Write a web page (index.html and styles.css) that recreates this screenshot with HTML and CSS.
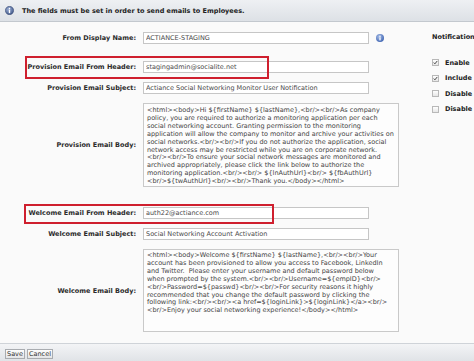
FILE: index.html
```html
<!DOCTYPE html>
<html>
<head>
<meta charset="utf-8">
<link rel="stylesheet" href="styles.css">
</head>
<body>
<div class="page">
  <div class="topbar">
    <svg class="icon-top" viewBox="0 0 10 10" width="9" height="9"><defs><radialGradient id="gt" cx="40%" cy="35%" r="70%"><stop offset="0" stop-color="#9db0d6"/><stop offset="1" stop-color="#3f5688"/></radialGradient></defs><circle cx="5" cy="5" r="4.6" fill="url(#gt)" stroke="#34476f" stroke-width="0.6"/><circle cx="5" cy="2.9" r="0.85" fill="#fff"/><rect x="4.25" y="4.2" width="1.5" height="3.7" fill="#fff"/></svg>
    <span class="topbar-text">The fields must be set in order to send emails to Employees.</span>
  </div>
  <div class="main">
    <form class="form">
      <div class="row">
        <label class="lbl">From Display Name:</label>
        <input class="txt" type="text" value="ACTIANCE-STAGING">
        <svg class="icon-info" viewBox="0 0 10 10" width="8" height="8"><defs><radialGradient id="gi" cx="40%" cy="35%" r="70%"><stop offset="0" stop-color="#a9bfe9"/><stop offset="1" stop-color="#3c62b0"/></radialGradient></defs><circle cx="5" cy="5" r="5" fill="url(#gi)"/><circle cx="5" cy="2.8" r="0.9" fill="#fff"/><rect x="4.2" y="4.2" width="1.6" height="3.8" fill="#fff"/></svg>
      </div>
      <div class="row row-prov-head">
        <label class="lbl">Provision Email From Header:</label>
        <input class="txt" type="text" value="stagingadmin@socialite.net">
        <span class="hl hl-prov"></span>
      </div>
      <div class="row">
        <label class="lbl">Provision Email Subject:</label>
        <input class="txt" type="text" value="Actiance Social Networking Monitor User Notification">
      </div>
      <div class="row">
        <label class="lbl">Provision Email Body:</label>
        <textarea class="area area-prov" wrap="off">&lt;html&gt;&lt;body&gt;Hi ${firstName} ${lastName},&lt;br/&gt;&lt;br/&gt;As company
policy, you are required to authorize a monitoring application per each
social networking account. Granting permission to the monitoring
application will allow the company to monitor and archive your activities on
social networks.&lt;br/&gt;&lt;br/&gt;If you do not authorize the application, social
network access may be restricted while you are on corporate network.
&lt;br/&gt;&lt;br/&gt;To ensure your social network messages are monitored and
archived appropriately, please click the link below to authorize the
monitoring application.&lt;br/&gt;&lt;br/&gt; ${lnAuthUrl}&lt;br/&gt; ${fbAuthUrl}
&lt;br/&gt;${twAuthUrl}&lt;br/&gt;&lt;br/&gt;Thank you.&lt;/body&gt;&lt;/html&gt;</textarea>
      </div>
      <div class="row row-wel-head">
        <label class="lbl">Welcome Email From Header:</label>
        <input class="txt" type="text" value="auth22@actiance.com">
        <span class="hl hl-wel"></span>
      </div>
      <div class="row">
        <label class="lbl">Welcome Email Subject:</label>
        <input class="txt" type="text" value="Social Networking Account Activation">
      </div>
      <div class="row">
        <label class="lbl">Welcome Email Body:</label>
        <textarea class="area area-wel" wrap="off">&lt;html&gt;&lt;body&gt;Welcome ${firstName} ${lastName},&lt;br/&gt;&lt;br/&gt;Your
account has been provisioned to allow you access to Facebook, LinkedIn
and Twitter.  Please enter your username and default password below
when prompted by the system.&lt;br/&gt;&lt;br/&gt;Username=${empID}&lt;br/&gt;
&lt;br/&gt;Password=${passwd}&lt;br/&gt;&lt;br/&gt;For security reasons it highly
recommended that you change the default password by clicking the
following link:&lt;br/&gt;&lt;br/&gt;&lt;a href=${loginLink}&gt;${loginLink}&lt;/a&gt;&lt;br/&gt;
&lt;br/&gt;Enjoy your social networking experience!&lt;/body&gt;&lt;/html&gt;</textarea>
      </div>
    </form>
    <aside class="side">
      <div class="side-title">Notification</div>
      <div class="opt opt-first"><span class="cb"><svg viewBox="0 0 7 7" width="5" height="5"><path d="M1 3.6 L2.7 5.3 L6 1.3" stroke="#2a2a2a" stroke-width="1.2" fill="none"/></svg></span><span class="opt-text">Enable</span></div>
      <div class="opt"><span class="cb"><svg viewBox="0 0 7 7" width="5" height="5"><path d="M1 3.6 L2.7 5.3 L6 1.3" stroke="#2a2a2a" stroke-width="1.2" fill="none"/></svg></span><span class="opt-text">Include</span></div>
      <div class="opt"><span class="cb"></span><span class="opt-text">Disable</span></div>
      <div class="opt"><span class="cb"></span><span class="opt-text">Disable</span></div>
    </aside>
  </div>
  <div class="footer">
    <button class="btn" type="button">Save</button>
    <button class="btn" type="button">Cancel</button>
  </div>
</div>
</body>
</html>
```

FILE: styles.css
```css
html, body {
  margin: 0;
  padding: 0;
}
body {
  font-family: "DejaVu Sans", Verdana, sans-serif;
  font-size: 6.5px;
  color: #2b2b2b;
  background: #fafafa;
}
.page {
  width: 474px;
  height: 361px;
  display: flex;
  flex-direction: column;
  overflow: hidden;
}
.topbar {
  flex: none;
  height: 21px;
  border-bottom: 1px solid #c3c8ce;
  background: linear-gradient(#eef0f3, #dde1e6);
  display: flex;
  align-items: center;
  padding-left: 5px;
  gap: 8px;
}
.icon-top { flex: none; }
.topbar-text {
  font-weight: bold;
  color: #222;
  white-space: nowrap;
}
.main {
  flex: 1;
  display: flex;
  min-height: 0;
}
.form {
  flex: none;
  width: 410px;
  margin: 0;
  padding-top: 10px;
  display: flex;
  flex-direction: column;
  gap: 9px;
}
.row {
  display: flex;
  align-items: center;
  gap: 7px;
  position: relative;
}
.row-prov-head { margin-top: 8px; }
.row-wel-head { margin-top: 11px; }
.lbl {
  flex: none;
  width: 136px;
  text-align: right;
  font-weight: bold;
  color: #2b2b2b;
  white-space: nowrap;
  line-height: 8px;
}
.txt {
  flex: none;
  width: 226px;
  height: 12px;
  box-sizing: border-box;
  margin: 0;
  border: 1px solid #c6c6c6;
  padding: 0 2px;
  font-family: "DejaVu Sans", Verdana, sans-serif;
  font-size: 6.5px;
  color: #4a4a4a;
  background: #fff;
  outline: none;
}
.icon-info { flex: none; }
.area {
  flex: none;
  width: 256px;
  box-sizing: border-box;
  margin: 0;
  border: 1px solid #c9c9c9;
  padding: 3px 3px 0;
  font-family: "DejaVu Sans", Verdana, sans-serif;
  font-size: 6.5px;
  line-height: 7.9px;
  color: #444;
  background: #fdfdfd;
  white-space: pre;
  overflow: hidden;
  resize: none;
  outline: none;
}
.area-prov { height: 84px; }
.area-wel { height: 83px; padding-top: 2px; }
.hl {
  position: absolute;
  box-sizing: border-box;
  border: 2px solid #cf1f2e;
  pointer-events: none;
}
.hl-prov {
  left: 25px;
  top: -5px;
  width: 244px;
  height: 23px;
}
.hl-wel {
  left: 24px;
  top: -3px;
  width: 250px;
  height: 20px;
}
.side {
  flex: 1;
  padding: 11px 0 0 22px;
  white-space: nowrap;
  overflow: hidden;
}
.side-title {
  font-weight: bold;
  line-height: 8px;
  color: #222;
}
.opt {
  display: flex;
  align-items: center;
  gap: 6px;
  height: 15.5px;
}
.opt-first { margin-top: 14px; }
.cb {
  flex: none;
  width: 7px;
  height: 7px;
  box-sizing: border-box;
  border: 1px solid #b8b8b8;
  background: linear-gradient(#ffffff, #e6e6e6);
  display: flex;
  align-items: center;
  justify-content: center;
}
.opt-text {
  font-weight: bold;
  color: #222;
}
.footer {
  flex: none;
  height: 18px;
  box-sizing: border-box;
  border-top: 1px solid #cfd3d8;
  background: linear-gradient(#f3f4f6, #e0e3e7);
  padding: 5px 0 0 5px;
  display: flex;
  align-items: flex-start;
  gap: 2px;
}
.btn {
  margin: 0;
  height: 10px;
  padding: 0 1px;
  border: 1px solid #a9acb0;
  background: linear-gradient(#fdfdfd, #e4e5e7);
  font-family: "DejaVu Sans", Verdana, sans-serif;
  font-size: 6.5px;
  line-height: 8px;
  color: #333;
}
```
